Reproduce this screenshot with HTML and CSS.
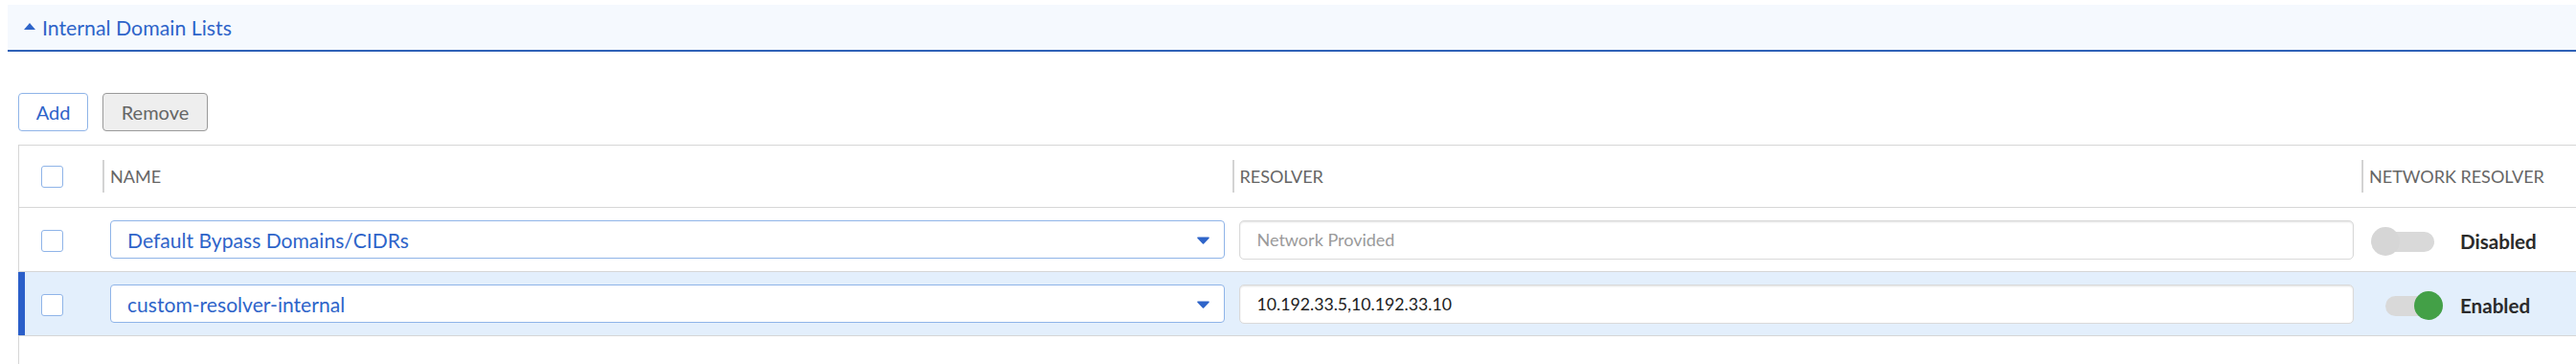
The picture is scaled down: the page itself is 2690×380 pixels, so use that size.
FILE: index.html
```html
<!DOCTYPE html>
<html lang="en">
<head>
<meta charset="utf-8">
<title>Internal Domain Lists</title>
<link rel="stylesheet" href="styles.css">
</head>
<body>
<div class="page">
  <div class="section-head">
    <span class="caret"></span>
    <span class="section-title">Internal Domain Lists</span>
  </div>
  <div class="section-body">
    <div class="toolbar">
      <button class="btn btn-add" type="button">Add</button>
      <button class="btn btn-remove" type="button">Remove</button>
    </div>
    <div class="grid">
      <div class="row head">
        <div class="cell cell-check"><span class="checkbox"></span></div>
        <div class="cell cell-th"><div class="th">NAME</div></div>
        <div class="cell cell-th"><div class="th">RESOLVER</div></div>
        <div class="cell cell-th"><div class="th">NETWORK RESOLVER</div></div>
      </div>
      <div class="row data">
        <div class="cell cell-check"><span class="checkbox"></span></div>
        <div class="cell cell-name">
          <div class="select">
            <span class="select-text">Default Bypass Domains/CIDRs</span>
            <svg class="select-arrow" width="13" height="8" viewBox="0 0 13 8"><path d="M1 .4h11a.8.8 0 0 1 .6 1.3L7.1 7.4a.8.8 0 0 1-1.2 0L.4 1.7A.8.8 0 0 1 1 .4z" fill="#2e64c9"/></svg>
          </div>
        </div>
        <div class="cell cell-resolver">
          <div class="input"><span class="placeholder">Network Provided</span></div>
        </div>
        <div class="cell cell-toggle">
          <div class="switch">
            <span class="track"></span>
            <span class="knob"></span>
          </div>
          <span class="state">Disabled</span>
        </div>
      </div>
      <div class="row data selected">
        <div class="cell cell-check"><span class="checkbox"></span></div>
        <div class="cell cell-name">
          <div class="select">
            <span class="select-text">custom-resolver-internal</span>
            <svg class="select-arrow" width="13" height="8" viewBox="0 0 13 8"><path d="M1 .4h11a.8.8 0 0 1 .6 1.3L7.1 7.4a.8.8 0 0 1-1.2 0L.4 1.7A.8.8 0 0 1 1 .4z" fill="#2e64c9"/></svg>
          </div>
        </div>
        <div class="cell cell-resolver">
          <div class="input"><span class="value">10.192.33.5,10.192.33.10</span></div>
        </div>
        <div class="cell cell-toggle">
          <div class="switch on">
            <span class="track"></span>
            <span class="knob"></span>
          </div>
          <span class="state">Enabled</span>
        </div>
      </div>
      <div class="grid-fill"></div>
    </div>
  </div>
</div>
</body>
</html>
```

FILE: styles.css
```css
html, body {
  margin: 0;
  padding: 0;
  background: #ffffff;
}

body {
  font-family: Lato, "Open Sans", "Liberation Sans", sans-serif;
  overflow: hidden;
}

.page {
  padding: 5px 0 0 8px;
}

.section-head {
  height: 47px;
  background: #f5f9fe;
  border-bottom: 2px solid #2f62b7;
  display: flex;
  align-items: center;
  padding-left: 17px;
  gap: 7px;
}

.caret {
  width: 0;
  height: 0;
  border-left: 6px solid transparent;
  border-right: 6px solid transparent;
  border-bottom: 7px solid #2e64c9;
  margin-top: -3px;
}

.section-title {
  font-size: 21.3px;
  color: #2e64c9;
}

.section-body {
  padding-left: 11px;
}

.toolbar {
  display: flex;
  gap: 15px;
  padding-top: 43px;
}

.btn {
  height: 40px;
  box-sizing: border-box;
  border-radius: 4px;
  font-family: inherit;
  font-size: 20px;
  padding: 0;
  cursor: pointer;
}

.btn-add {
  width: 73px;
  border: 1px solid #8fb4e8;
  background: #ffffff;
  color: #2e64c9;
}

.btn-remove {
  width: 110px;
  border: 1px solid #9a9a9a;
  background: #eeeeee;
  color: #666666;
}

.grid {
  margin-top: 14px;
  border-top: 1px solid #d6d6d6;
  border-left: 1px solid #d6d6d6;
}

.row {
  display: grid;
  grid-template-columns: 87px 1fr 1fr 224px;
  border-bottom: 1px solid #d6d6d6;
  position: relative;
}

.row.head {
  height: 64px;
}

.row.data {
  height: 66px;
}

.row.selected {
  background: #e3effc;
}

.row.selected::before {
  content: "";
  position: absolute;
  left: -1px;
  top: 0;
  bottom: 0;
  width: 7px;
  background: #2b5fc9;
}

.cell {
  display: flex;
  align-items: center;
  min-width: 0;
}

.cell-check {
  padding-left: 23px;
}

.checkbox {
  width: 23px;
  height: 23px;
  box-sizing: border-box;
  border: 1px solid #8fb4e8;
  border-radius: 3px;
  background: #ffffff;
}

.row.data .cell-check .checkbox {
  margin-top: 2px;
}

.th {
  height: 34px;
  border-left: 2px solid #d3d3d3;
  display: flex;
  align-items: center;
  padding-left: 6px;
  font-size: 18px;
  color: #666666;
}

.cell-name {
  padding: 0 8px 0 8px;
}

.cell-resolver {
  padding: 0 8px 0 7px;
}

.select {
  flex: 1;
  height: 40px;
  box-sizing: border-box;
  border: 1px solid #8fb4e8;
  border-radius: 4px;
  background: #ffffff;
  display: flex;
  align-items: center;
  justify-content: space-between;
  padding: 0 15px 0 17px;
}

.select-text {
  font-size: 21.1px;
  color: #2e64c9;
}

.select-arrow {
  display: block;
  margin-top: 2px;
}

.input {
  flex: 1;
  height: 41px;
  box-sizing: border-box;
  border: 1px solid #dadada;
  border-radius: 5px;
  background: #ffffff;
  box-shadow: inset 0 1px 2px rgba(0, 0, 0, 0.12);
  display: flex;
  align-items: center;
  padding-left: 18px;
  font-size: 17.7px;
}

.placeholder {
  color: #9a9a9a;
  font-size: 18px;
}

.value {
  color: #222222;
}

.cell-toggle {
  padding: 4px 0 0 10px;
}

.switch {
  position: relative;
  width: 75px;
  height: 30px;
  flex: none;
}

.track {
  position: absolute;
  left: 15px;
  top: 5px;
  width: 51px;
  height: 21px;
  border-radius: 11px;
  background: #d9d9d9;
}

.knob {
  position: absolute;
  top: 0;
  left: 0;
  width: 30px;
  height: 30px;
  border-radius: 50%;
  background: #d6d6d6;
}

.switch.on .knob {
  left: 45px;
  background: #43a047;
}

.state {
  margin-left: 18px;
  font-weight: 700;
  font-size: 20.6px;
  color: #2b2b2b;
}

.grid-fill {
  height: 60px;
}
```
